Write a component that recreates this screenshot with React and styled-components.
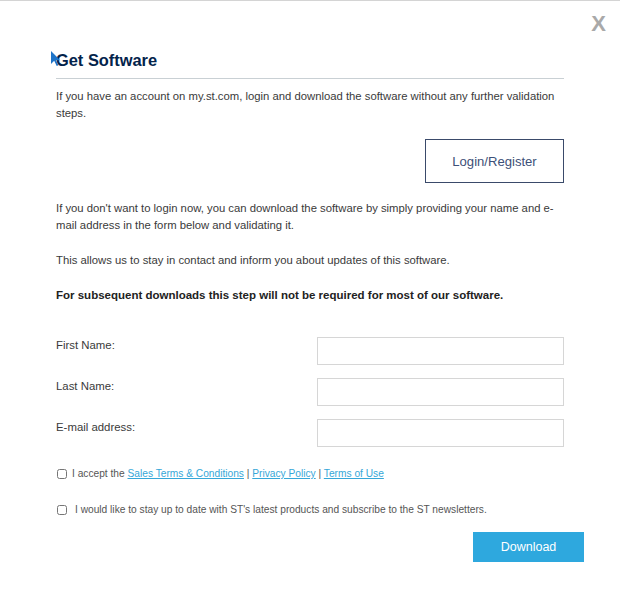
import styled, { createGlobalStyle } from "styled-components";

const GlobalStyle = createGlobalStyle`
  html, body {
    margin: 0;
    padding: 0;
    background: #fff;
  }
  body {
    font-family: "Liberation Sans", Arial, sans-serif;
    color: #333;
  }
`;

const Page = styled.div`
  position: relative;
  min-height: 609px;
  box-sizing: border-box;
  border-top: 1px solid #d4d4d4;
  padding: 48px 0 0 56px;
`;

const Close = styled.button`
  position: absolute;
  top: 10px;
  right: 14px;
  border: 0;
  background: none;
  padding: 0;
  font-family: "Liberation Sans", Arial, sans-serif;
  font-weight: 700;
  font-size: 22px;
  line-height: 26px;
  color: #a9a9a9;
  cursor: pointer;
`;

const Cursor = styled.svg`
  position: absolute;
  left: 50px;
  top: 49px;
`;

const Content = styled.div`
  width: 508px;
`;

const Title = styled.h2`
  margin: 0;
  font-size: 16.4px;
  line-height: 22px;
  font-weight: 700;
  color: #03234b;
  padding-bottom: 7px;
  border-bottom: 1px solid #c9d0d4;
`;

const Text = styled.p`
  margin: ${({ $top }) => $top || 0}px 0 0;
  font-size: ${({ $bold }) => ($bold ? 11.5 : 11.3)}px;
  line-height: 17px;
  font-weight: ${({ $bold }) => ($bold ? 700 : 400)};
  color: ${({ $bold }) => ($bold ? "#222" : "#3a3a3a")};
`;

const Actions = styled.div`
  display: flex;
  justify-content: flex-end;
  margin-top: 17px;
`;

const OutlineButton = styled.button`
  width: 139px;
  height: 44px;
  box-sizing: border-box;
  border: 1px solid #3a4a6a;
  background: #fff;
  font-family: "Liberation Sans", Arial, sans-serif;
  font-size: 13.1px;
  color: #3d5078;
`;

const Form = styled.div`
  display: grid;
  grid-template-columns: 261px 247px;
  row-gap: 13px;
  margin-top: 33px;
`;

const Label = styled.label`
  font-size: 11.4px;
  line-height: 17px;
  color: #3a3a3a;
`;

const Input = styled.input`
  height: 28px;
  box-sizing: border-box;
  border: 1px solid #d6d6d6;
  background: #fff;
  margin: 0;
`;

const CheckRow = styled.label`
  display: flex;
  align-items: center;
  gap: ${({ $gap }) => $gap}px;
  margin-top: ${({ $top }) => $top}px;
  font-size: 10.2px;
  line-height: 16px;
  color: #555;
`;

const Box = styled.input`
  margin: 0 0 0 1px;
  width: 10px;
  height: 10px;
`;

const TermLink = styled.a`
  color: #36a7d8;
  text-decoration: underline;
`;

const Footer = styled.div`
  display: flex;
  justify-content: flex-end;
  margin: 14px -20px 0 0;
`;

const PrimaryButton = styled.button`
  width: 111px;
  height: 30px;
  border: 0;
  background: #2ea8de;
  color: #fff;
  font-family: "Liberation Sans", Arial, sans-serif;
  font-size: 12.5px;
`;

export default function App() {
  return (
    <>
      <GlobalStyle />
      <Page>
        <Close aria-label="close">X</Close>
        <Cursor width="11" height="17" viewBox="0 0 11 17">
          <path d="M1 1 L1 14 L4.2 10.8 L6.7 16 L8.4 15.2 L6 10.2 L10.2 10.2 Z" fill="#1f74c8" />
        </Cursor>
        <Content>
          <Title>Get Software</Title>
          <Text $top={9}>
            If you have an account on my.st.com, login and download the software without any further validation
            steps.
          </Text>
          <Actions>
            <OutlineButton>Login/Register</OutlineButton>
          </Actions>
          <Text $top={17}>
            If you don't want to login now, you can download the software by simply providing your name and e-mail
            address in the form below and validating it.
          </Text>
          <Text $top={18}>This allows us to stay in contact and inform you about updates of this software.</Text>
          <Text $top={18} $bold>
            For subsequent downloads this step will not be required for most of our software.
          </Text>
          <Form>
            <Label>First Name:</Label>
            <Input />
            <Label>Last Name:</Label>
            <Input />
            <Label>E-mail address:</Label>
            <Input />
          </Form>
          <CheckRow $top={19} $gap={5}>
            <Box type="checkbox" />
            <span>
              I accept the <TermLink href="#">Sales Terms &amp; Conditions</TermLink> |{" "}
              <TermLink href="#">Privacy Policy</TermLink> | <TermLink href="#">Terms of Use</TermLink>
            </span>
          </CheckRow>
          <CheckRow $top={20} $gap={8}>
            <Box type="checkbox" />
            <span>I would like to stay up to date with ST's latest products and subscribe to the ST newsletters.</span>
          </CheckRow>
          <Footer>
            <PrimaryButton>Download</PrimaryButton>
          </Footer>
        </Content>
      </Page>
    </>
  );
}
